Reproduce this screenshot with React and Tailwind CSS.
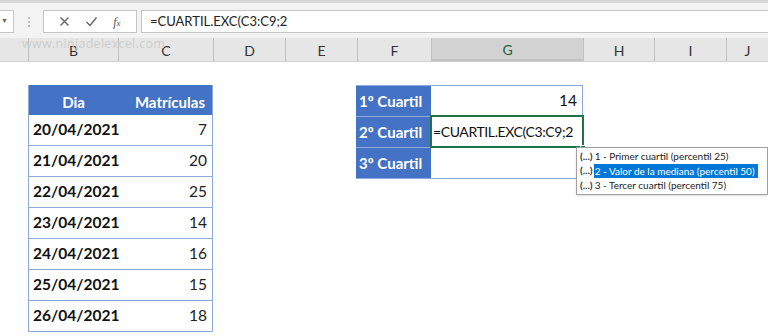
import React from "react";

const font = { fontFamily: 'Lato, "Liberation Sans", sans-serif' };
const headFont = { fontFamily: '"Open Sans", "Liberation Sans", sans-serif' };

const cols = [
  { id: "", w: "w-[28px]" },
  { id: "B", w: "w-[90px]" },
  { id: "C", w: "w-[95px]" },
  { id: "D", w: "w-[72px]" },
  { id: "E", w: "w-[72px]" },
  { id: "F", w: "w-[74px]" },
  { id: "G", w: "w-[152px]" },
  { id: "H", w: "w-[71px]" },
  { id: "I", w: "w-[72px]" },
  { id: "J", w: "flex-1" },
];

const rows = [
  ["20/04/2021", 7],
  ["21/04/2021", 20],
  ["22/04/2021", 25],
  ["23/04/2021", 14],
  ["24/04/2021", 16],
  ["25/04/2021", 15],
  ["26/04/2021", 18],
];

const FormulaBar = () => (
  <div className="h-[38px] bg-[#f3f3f3] border-t-[3px] border-[#d8d8d8] flex items-start pt-[7px] relative">
    <div className="w-[14px] h-[23px] bg-white border-y border-r border-[#c6c6c6] flex items-center justify-center">
      <span className="text-[7px] text-[#666] ml-[-4px]">▼</span>
    </div>
    <div className="w-[29px] h-[23px] flex items-center justify-center">
      <div className="flex flex-col gap-[2px]">
        <span className="w-[2px] h-[2px] bg-[#bbb]" />
        <span className="w-[2px] h-[2px] bg-[#bbb]" />
        <span className="w-[2px] h-[2px] bg-[#bbb]" />
      </div>
    </div>
    <div className="w-[94px] h-[23px] bg-white border border-[#c6c6c6] flex items-center justify-around px-2">
      <svg width="11" height="11" viewBox="0 0 11 11">
        <path d="M1.5 1.5 L9.5 9.5 M9.5 1.5 L1.5 9.5" stroke="#666" strokeWidth="1.4" />
      </svg>
      <svg width="13" height="11" viewBox="0 0 13 11">
        <path d="M1.5 6 L5 9.5 L11.5 1.5" stroke="#666" strokeWidth="1.5" fill="none" />
      </svg>
      <span className="text-[12px] italic text-[#555]" style={{ fontFamily: '"Liberation Serif", serif' }}>
        f<span className="text-[9px]">x</span>
      </span>
    </div>
    <div className="ml-[4px] flex-1 h-[23px] bg-white border-y border-l border-[#c6c6c6] flex items-center pl-[8px]">
      <span className="text-[13px] text-[#222]" style={font}>=CUARTIL.EXC(C3:C9;2</span>
    </div>
  </div>
);

const ColHeaders = () => (
  <div className="h-[24px] bg-[#e6e6e6] flex relative border-b border-[#d0d0d0]">
    {cols.map((c, i) => (
      <div
        key={i}
        className={`${c.w} h-full flex items-center justify-center pt-[2px] text-[14px] ${
          c.id === "G"
            ? "bg-[#d2d2d2] text-[#1d5e3a] border-b-2 border-[#217346]"
            : "text-[#333]"
        } ${i > 0 ? "border-l border-[#c0c0c0]" : ""}`}
        style={font}
      >
        {c.id}
      </div>
    ))}
    <span
      className="absolute left-[22px] top-[-3px] text-[12.5px] text-[#cdcdcd] tracking-[0.3px]"
      style={headFont}
    >
      www.ninjadelexcel.com
    </span>
  </div>
);

const Cell = ({ w, className = "", children }) => (
  <div className={`${w} h-[30px] flex items-end pb-[4px] ${className}`} style={font}>
    {children}
  </div>
);

const Sheet = () => (
  <div className="flex pt-[23px] relative">
    <div className="w-[28px]" />
    {/* data table */}
    <div className="flex flex-col w-[185px] border-x border-b border-[#8ea9db]">
      <div className="h-[30px] bg-[#4472c4] flex items-center pt-[4px] text-white font-bold text-[15px]" style={font}>
        <div className="w-[89px] text-center">Dia</div>
        <div className="flex-1 text-right pr-[7px]">Matrículas</div>
      </div>
      {rows.map(([d, v], i) => (
        <div key={i} className={`flex ${i > 0 ? "border-t border-[#8ea9db]" : ""}`}>
          <Cell w="w-[89px]" className="pl-[4px] font-bold text-[15.5px] text-[#111]">
            {d}
          </Cell>
          <Cell w="flex-1" className="justify-end pr-[5px] text-[15.5px] text-[#222]">
            {v}
          </Cell>
        </div>
      ))}
    </div>
    <div className="w-[143px]" />
    {/* quartile table */}
    <div className="flex flex-col w-[227px] self-start border-r border-b border-t border-[#8ea9db]">
      {["1º Cuartil", "2º Cuartil", "3º Cuartil"].map((label, i) => (
        <div key={i} className={`flex ${i > 0 ? "border-t border-[#8ea9db]" : ""}`}>
          <Cell w="w-[75px]" className="bg-[#4472c4] text-white font-bold text-[15px] pl-[3px] whitespace-nowrap">
            {label}
          </Cell>
          {i === 0 && (
            <Cell w="flex-1" className="justify-end pr-[5px] text-[15.5px] text-[#111]">
              14
            </Cell>
          )}
          {i === 1 && (
            <div className="flex-1 h-[30px] relative">
              <div className="absolute left-[-1px] top-[-2px] w-[154px] h-[33px] border-2 border-[#217346] flex items-end pb-[4px] pl-[1px]">
                <span className="text-[14px] tracking-[-0.4px] text-[#111] whitespace-nowrap" style={font}>
                  =CUARTIL.EXC(C3:C9;2
                </span>
              </div>
              <span className="absolute right-[-4px] bottom-[-4px] w-[6px] h-[6px] bg-[#217346] border border-white" />
            </div>
          )}
          {i === 2 && <Cell w="flex-1" />}
        </div>
      ))}
    </div>
    {/* autocomplete list */}
    <div
      className="absolute left-[576px] top-[85px] w-[192px] bg-white border border-[#a0a0a0] shadow-sm py-[1px] text-[10px] text-[#222] whitespace-nowrap"
      style={font}
    >
      {[
        "1 - Primer cuartil (percentil 25)",
        "2 - Valor de la mediana (percentil 50)",
        "3 - Tercer cuartil (percentil 75)",
      ].map((t, i) => (
        <div key={i} className="h-[14.5px] flex items-center pl-[3px]">
          <span className="font-bold text-[#333] mr-[1px]">(...)</span>
          <span className={`px-[1px] leading-[14px] ${i === 1 ? "bg-[#0078d7] text-white w-[164px]" : ""}`}>
            {t}
          </span>
        </div>
      ))}
    </div>
  </div>
);

export default function App() {
  return (
    <div className="w-[768px] h-[336px] bg-white overflow-hidden">
      <FormulaBar />
      <ColHeaders />
      <Sheet />
    </div>
  );
}
